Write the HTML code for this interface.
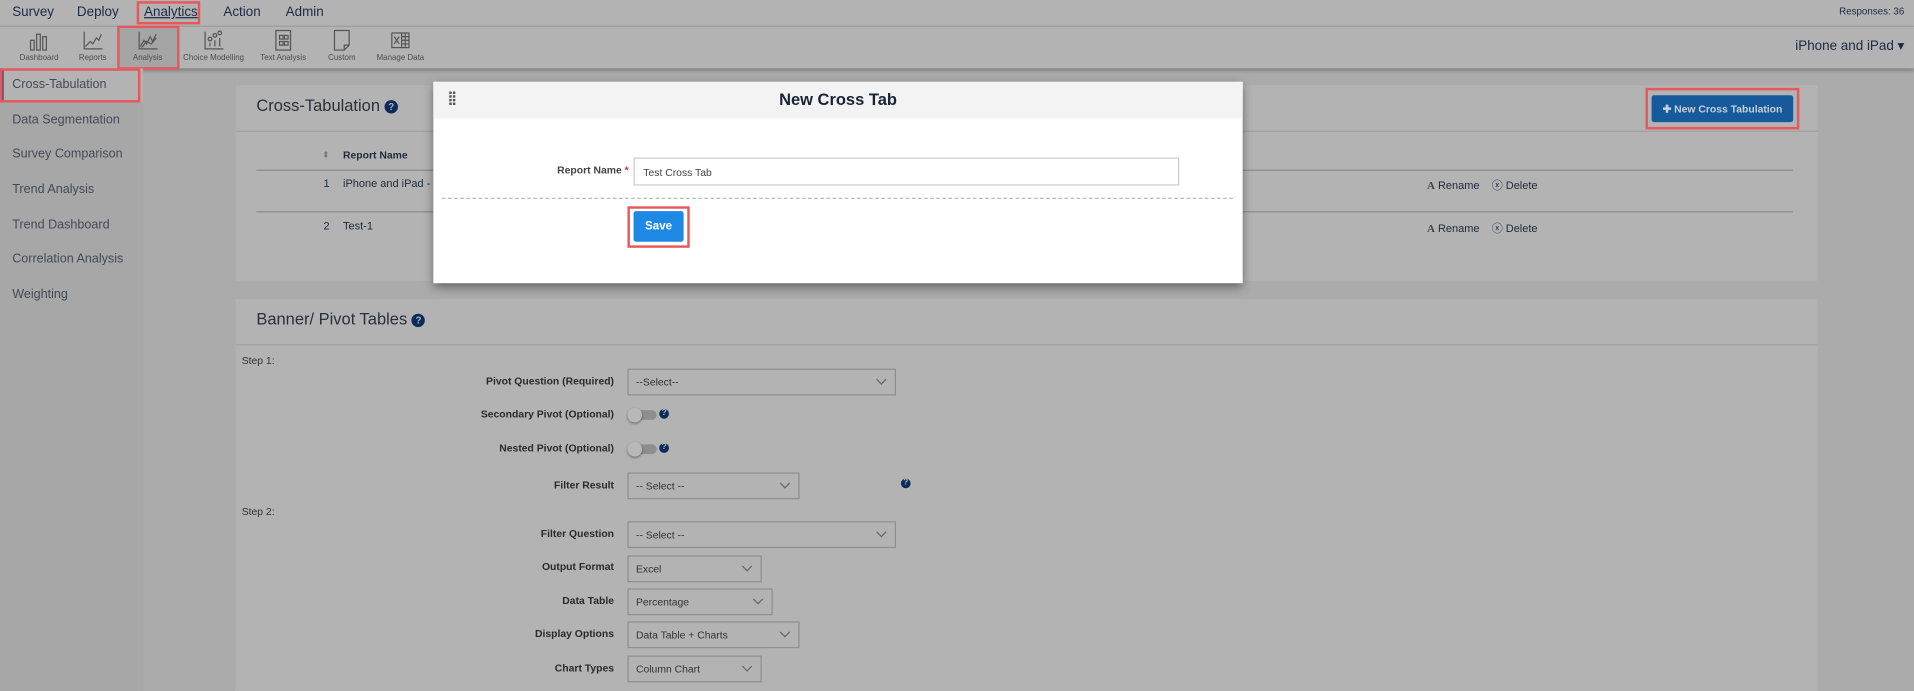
<!DOCTYPE html>
<html><head><meta charset="utf-8"><style>
*{box-sizing:border-box;margin:0;padding:0}
html,body{width:1914px;height:691px;overflow:hidden;background:#ababab}
#s{position:absolute;left:0;top:0;width:1568px;height:566px;transform:scale(1.2207);transform-origin:0 0;font-family:"Liberation Sans",sans-serif;color:#1d2a3e;background:#ababab}
.a{position:absolute;white-space:nowrap}
.nav{left:0;top:0;width:1568px;height:22px;background:#b3b3b3;border-bottom:1px solid #9c9c9c}
.nav .a{font-size:11px;top:4px;color:#1d2a44}
.sub{left:0;top:22px;width:1568px;height:34px;background:#b3b3b3;box-shadow:0 2px 3px rgba(0,0,0,.25)}
.ic{position:absolute;top:2px;width:60px;text-align:center;font-size:6.5px;color:#4d4d4d}
.ic svg{display:block;margin:0 auto 2px;width:18px;height:18px}
.side{left:0;top:56px;width:117px;height:510px;background:#a7a7a7}
.side .a{left:10px;font-size:10.3px;color:#444a55}
.red{position:absolute;border:2px solid #e8585a}
.panel{background:#b3b3b3}
.lbl{position:absolute;right:0;font-size:8.5px;font-weight:bold;color:#2a2a2a;text-align:right}
.sel{position:absolute;border:1px solid #8f8f8f;background:#b3b3b3;font-size:8.5px;color:#333;padding:5px 6px;height:22px}
.sel:after{content:"";position:absolute;right:8px;top:5px;width:5px;height:5px;border-right:1px solid #666;border-bottom:1px solid #666;transform:rotate(45deg)}
.help{display:inline-block;width:10px;height:10px;border-radius:50%;background:#0c2a5c;color:#b3b3b3;font-size:8px;font-weight:bold;text-align:center;line-height:10px;vertical-align:middle}
.tog{position:absolute;width:22px;height:8px;border-radius:4px;background:#8e8e8e}
.tog:before{content:"";position:absolute;left:-2px;top:-2px;width:12px;height:12px;border-radius:50%;background:#b8b8b8;box-shadow:0 1px 2px rgba(0,0,0,.4)}
.dot{position:absolute;width:2px;height:2px;background:#555}
</style></head><body><div id="s">

<div class="a nav">
<span class="a" style="left:10px">Survey</span>
<span class="a" style="left:63px">Deploy</span>
<span class="a" style="left:118px;text-decoration:underline">Analytics</span>
<span class="a" style="left:183px">Action</span>
<span class="a" style="left:234px">Admin</span>
<span class="a" style="right:8px;top:5px;font-size:8px">Responses: 36</span>
</div>
<div class="red" style="left:112px;top:1px;width:52px;height:19px"></div>

<div class="a sub">
<div class="ic" style="left:2px"><svg viewBox="0 0 18 18" fill="none" stroke="#555" stroke-width="1"><rect x="2" y="9" width="3" height="8"/><rect x="7" y="4" width="3" height="13"/><rect x="12" y="6" width="3" height="11"/></svg>Dashboard</div>
<div class="ic" style="left:46px"><svg viewBox="0 0 18 18" fill="none" stroke="#555" stroke-width="1"><path d="M2 2V16H17M3 14L7 10L9 12L12 7L14 9L16 4"/></svg>Reports</div>
<div class="ic" style="left:145px"><svg viewBox="0 0 18 18" fill="none" stroke="#555" stroke-width="1"><path d="M2 2V16H17M6 14V11M10 14V9M14 14V7"/><circle cx="6" cy="8" r="1.5"/><circle cx="10" cy="5" r="1.5"/><circle cx="14" cy="3" r="1.5"/></svg>Choice Modelling</div>
<div class="ic" style="left:202px"><svg viewBox="0 0 18 18" fill="none" stroke="#555" stroke-width="1"><rect x="3" y="1" width="12" height="16"/><rect x="6" y="5" width="3" height="3"/><rect x="10" y="5" width="3" height="3"/><rect x="6" y="10" width="3" height="3"/><rect x="10" y="10" width="3" height="3"/></svg>Text Analysis</div>
<div class="ic" style="left:250px"><svg viewBox="0 0 18 18" fill="none" stroke="#555" stroke-width="1"><path d="M3 1H15V13L11 17H3Z M11 17V13H15"/></svg>Custom</div>
<div class="ic" style="left:298px"><svg viewBox="0 0 18 18" fill="none" stroke="#555" stroke-width="1"><rect x="2" y="3" width="8" height="12"/><path d="M10 3H16V15H10M10 6H16M10 9H16M10 12H16M13 3V15M4 6L8 12M8 6L4 12"/></svg>Manage Data</div>
<span class="a" style="right:8px;top:9px;font-size:11px;color:#1d2a44">iPhone and iPad ▾</span>
</div>
<div class="a" style="left:97px;top:22px;width:49px;height:34px;background:#a5a5a5"></div>
<div class="ic" style="left:91px;top:24px;position:absolute"><svg viewBox="0 0 18 18" fill="none" stroke="#555" stroke-width="1"><path d="M2 2V16H17M3 14L6 9L8 12L11 6L13 10L16 4M4 15L8 10L12 12L16 7"/></svg>Analysis</div>
<div class="red" style="left:96px;top:21px;width:51px;height:36px"></div>

<div class="a side">
<div class="a" style="left:0;top:0;width:117px;height:28px;background:#b3b3b3;border-left:3px solid #1f4e8a"></div>
<span class="a" style="top:8px">Cross-Tabulation</span>
<span class="a" style="top:37px">Data Segmentation</span>
<span class="a" style="top:65px">Survey Comparison</span>
<span class="a" style="top:94px">Trend Analysis</span>
<span class="a" style="top:123px">Trend Dashboard</span>
<span class="a" style="top:151px">Correlation Analysis</span>
<span class="a" style="top:180px">Weighting</span>
</div>
<div class="red" style="left:0;top:56px;width:115px;height:28px"></div>

<div class="a panel" style="left:193px;top:70px;width:1296px;height:160px">
<div class="a" style="left:0;top:37px;width:1296px;border-top:1px solid #a0a0a0"></div>
<span class="a" style="left:17px;top:9px;font-size:13.5px;color:#2a2f3a">Cross-Tabulation <span class="help" style="width:11px;height:11px;line-height:11px">?</span></span>
<div class="a" style="left:1160px;top:8px;width:116px;height:22px;background:#175a9c;border-radius:2px;color:#c8d0dc;font-size:8.5px;font-weight:bold;padding:6px 0 0 9px">✚ New Cross Tabulation</div>
<span class="a" style="left:71px;top:53px;font-size:7px;color:#777">⬍</span>
<span class="a" style="left:88px;top:52px;font-size:8.5px;font-weight:bold">Report Name</span>
<div class="a" style="left:17px;top:69px;width:1259px;border-top:1px solid #8c8c8c"></div>
<span class="a" style="left:72px;top:75px;font-size:9px">1</span>
<span class="a" style="left:88px;top:75px;font-size:9px">iPhone and iPad -</span>
<div class="a" style="left:17px;top:103px;width:1259px;border-top:1px solid #8c8c8c"></div>
<span class="a" style="left:72px;top:110px;font-size:9px">2</span>
<span class="a" style="left:88px;top:110px;font-size:9px">Test-1</span>
<span class="a" style="left:976px;top:75px;font-size:9px"><b style="font-family:'Liberation Serif',serif;color:#444">A</b> Rename &nbsp;&nbsp;&nbsp;ⓧ Delete</span>
<span class="a" style="left:976px;top:110px;font-size:9px"><b style="font-family:'Liberation Serif',serif;color:#444">A</b> Rename &nbsp;&nbsp;&nbsp;ⓧ Delete</span>
</div>
<div class="red" style="left:1348px;top:72px;width:126px;height:34px"></div>

<div class="a panel" style="left:193px;top:245px;width:1296px;height:321px">
<div class="a" style="left:0;top:37px;width:1296px;border-top:1px solid #a0a0a0"></div>
<span class="a" style="left:17px;top:9px;font-size:13.5px;color:#2a2f3a">Banner/ Pivot Tables <span class="help" style="width:11px;height:11px;line-height:11px">?</span></span>
<span class="a" style="left:5px;top:45px;font-size:8.5px;color:#333">Step 1:</span>
<span class="a" style="left:5px;top:169px;font-size:8.5px;color:#333">Step 2:</span>
<div class="a" style="left:0;top:0;width:310px;height:321px">
<span class="lbl" style="top:62px">Pivot Question (Required)</span>
<span class="lbl" style="top:89px">Secondary Pivot (Optional)</span>
<span class="lbl" style="top:117px">Nested Pivot (Optional)</span>
<span class="lbl" style="top:147px">Filter Result</span>
<span class="lbl" style="top:187px">Filter Question</span>
<span class="lbl" style="top:214px">Output Format</span>
<span class="lbl" style="top:242px">Data Table</span>
<span class="lbl" style="top:269px">Display Options</span>
<span class="lbl" style="top:297px">Chart Types</span>
</div>
<div class="sel" style="left:321px;top:57px;width:220px">--Select--</div>
<div class="tog" style="left:323px;top:91px"></div><span class="help" style="position:absolute;left:347px;top:90px;width:8px;height:8px;line-height:8px;font-size:7px">?</span>
<div class="tog" style="left:323px;top:119px"></div><span class="help" style="position:absolute;left:347px;top:118px;width:8px;height:8px;line-height:8px;font-size:7px">?</span>
<div class="sel" style="left:321px;top:142px;width:141px">-- Select --</div>
<span class="help" style="position:absolute;left:545px;top:147px;width:8px;height:8px;line-height:8px;font-size:7px">?</span>
<div class="sel" style="left:321px;top:182px;width:220px">-- Select --</div>
<div class="sel" style="left:321px;top:210px;width:110px">Excel</div>
<div class="sel" style="left:321px;top:237px;width:119px">Percentage</div>
<div class="sel" style="left:321px;top:264px;width:141px">Data Table + Charts</div>
<div class="sel" style="left:321px;top:292px;width:110px">Column Chart</div>
</div>

<div class="a" style="left:355px;top:67px;width:663px;height:165px;background:#fff;box-shadow:0 3px 8px rgba(0,0,0,.45)">
<div class="a" style="left:0;top:0;width:663px;height:30px;background:#f3f3f3"></div>
<div class="dot" style="left:13px;top:8px"></div><div class="dot" style="left:16px;top:8px"></div>
<div class="dot" style="left:13px;top:11px"></div><div class="dot" style="left:16px;top:11px"></div>
<div class="dot" style="left:13px;top:14px"></div><div class="dot" style="left:16px;top:14px"></div>
<div class="dot" style="left:13px;top:17px"></div><div class="dot" style="left:16px;top:17px"></div>
<span class="a" style="left:0;width:663px;text-align:center;top:7px;font-size:13.5px;font-weight:bold;color:#1a2437">New Cross Tab</span>
<span class="a" style="left:60px;width:100px;text-align:right;top:67px;font-size:8.5px;font-weight:bold;color:#444">Report Name <span style="color:#d9282f">*</span></span>
<div class="a" style="left:164px;top:62px;width:447px;height:23px;border:1px solid #ccc;font-size:8.5px;color:#444;padding:6px 7px">Test Cross Tab</div>
<div class="a" style="left:7px;top:95px;width:648px;border-top:1px dashed #bbb"></div>
<div class="a" style="left:164px;top:106px;width:41px;height:25px;background:#1e88e5;border-radius:2px;color:#fff;font-size:9.5px;font-weight:bold;text-align:center;line-height:25px">Save</div>
<div class="red" style="left:159px;top:102px;width:51px;height:34px"></div>
</div>

</div></body></html>
